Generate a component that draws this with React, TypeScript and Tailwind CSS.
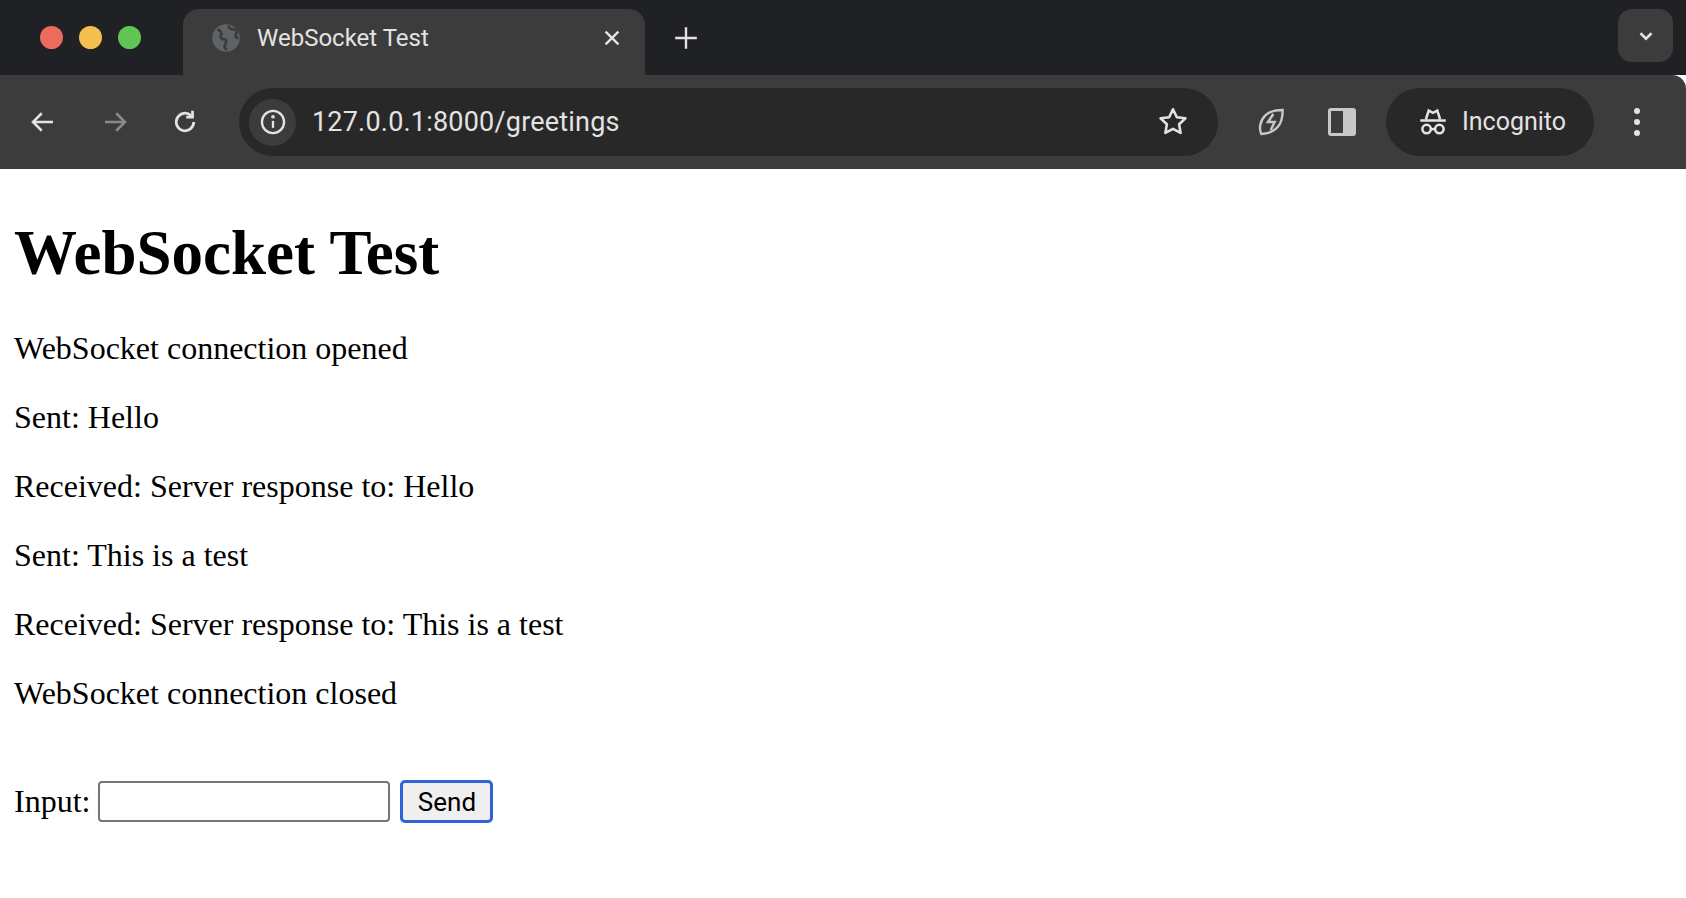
import React from "react";

const serif = { fontFamily: '"Liberation Serif", "Times New Roman", serif' };
const sans = { fontFamily: 'Roboto, "Noto Sans", Arial, sans-serif' };

export default function App() {
  const lines = [
    "WebSocket connection opened",
    "Sent: Hello",
    "Received: Server response to: Hello",
    "Sent: This is a test",
    "Received: Server response to: This is a test",
    "WebSocket connection closed",
  ];
  return (
    <div className="w-[1686px] h-[898px] bg-white overflow-hidden" style={sans}>
      {/* tab strip */}
      <div className="h-[75px] bg-[#202124] flex items-end relative">
        <div className="flex items-center gap-[16px] pl-[40px] h-[75px] w-[183px]">
          <div className="w-[23px] h-[23px] rounded-full bg-[#ec6a5e]" />
          <div className="w-[23px] h-[23px] rounded-full bg-[#f4bf4f]" />
          <div className="w-[23px] h-[23px] rounded-full bg-[#61c554]" />
        </div>
        <div className="w-[462px] h-[66px] bg-[#3c3c3c] rounded-t-[16px] flex items-center pl-[28px] pr-[22px] pb-[8px]">
          <svg width="30" height="30" viewBox="0 0 24 24">
            <circle cx="12" cy="12" r="11" fill="#5f6368" />
            <path d="M5 5c3 1 4 3 3 5s1 3 3 3 1 3 0 5c-1 2 1 3 2 3M14 2c0 2 2 3 4 3s3 2 2 4c-1 2 0 3 2 3" stroke="#3c3c3c" strokeWidth="2.2" fill="none" />
          </svg>
          <span className="ml-[16px] text-[24px] text-[#e3e3e3] flex-1">WebSocket Test</span>
          <svg width="22" height="22" viewBox="0 0 24 24" stroke="#e3e3e3" strokeWidth="2.6"><path d="M5 5l14 14M19 5L5 19" /></svg>
        </div>
        <div className="h-[66px] flex items-center pb-[8px] ml-[28px]">
          <svg width="26" height="26" viewBox="0 0 24 24" stroke="#e3e3e3" strokeWidth="2.2"><path d="M12 2v20M2 12h20" /></svg>
        </div>
        <div className="absolute right-[13px] top-[9px] w-[55px] h-[53px] rounded-[14px] bg-[#3c3c3c] flex items-center justify-center">
          <svg width="22" height="22" viewBox="0 0 24 24" fill="none" stroke="#e3e3e3" strokeWidth="2.8"><path d="M6 9l6 6 6-6" /></svg>
        </div>
      </div>
      {/* toolbar */}
      <div className="h-[94px] bg-[#3c3c3c] rounded-tr-[14px] flex items-center">
        <div className="w-[239px] flex items-center">
          <svg className="ml-[28px]" width="30" height="30" viewBox="0 0 24 24" fill="none" stroke="#e3e3e3" strokeWidth="2"><path d="M20 12H5M11 5l-7 7 7 7" /></svg>
          <svg className="ml-[42px]" width="30" height="30" viewBox="0 0 24 24" fill="none" stroke="#8a8a8a" strokeWidth="2"><path d="M4 12h15M13 5l7 7-7 7" /></svg>
          <svg className="ml-[40px]" width="30" height="30" viewBox="0 0 24 24" fill="none" stroke="#e3e3e3" strokeWidth="2.2"><path d="M19 12a7 7 0 1 1-2.2-5.1" /><path d="M18 3v5h-5" /></svg>
        </div>
        <div className="w-[979px] h-[68px] rounded-full bg-[#282828] flex items-center pl-[10px] pr-[28px]">
          <div className="w-[47px] h-[47px] rounded-full bg-[#3c3c3c] flex items-center justify-center">
            <svg width="28" height="28" viewBox="0 0 24 24" fill="none" stroke="#e3e3e3" strokeWidth="2"><circle cx="12" cy="12" r="9.5" /><path d="M12 11v6" /><circle cx="12" cy="7.5" r="0.6" fill="#e3e3e3" /></svg>
          </div>
          <span className="ml-[16px] text-[27px] text-[#e3e3e3] flex-1 tracking-[0.2px]">127.0.0.1:8000/greetings</span>
          <svg width="34" height="34" viewBox="0 0 24 24" fill="none" stroke="#e3e3e3" strokeWidth="1.8" strokeLinejoin="round"><path d="M12 3l2.7 5.6 6.1.8-4.5 4.2 1.1 6.1L12 16.8l-5.4 2.9 1.1-6.1-4.5-4.2 6.1-.8z" /></svg>
        </div>
        <svg className="ml-[38px]" width="32" height="32" viewBox="0 0 24 24" fill="none" stroke="#c8c8c8" strokeWidth="1.8"><path d="M4 21c-2-4-1-10 3-14s10-4 13-4c0 3 0 9-4 13s-9 5-12 5z" /><path d="M13 6l-4 6h5l-3 6" /></svg>
        <div className="ml-[40px] w-[28px] h-[28px] rounded-[3px] bg-[#c8c8c8] flex justify-start p-[3px]">
          <div className="w-[12px] h-full bg-[#3c3c3c]" />
        </div>
        <div className="ml-[30px] w-[208px] h-[68px] rounded-full bg-[#282828] flex items-center pl-[30px]">
          <svg width="34" height="34" viewBox="0 0 24 24" fill="none" stroke="#e3e3e3" strokeWidth="1.8"><path d="M7 10l2-6 3 1.5L15 4l2 6M3 11h18" /><circle cx="7.5" cy="17" r="3" /><circle cx="16.5" cy="17" r="3" /><path d="M10.5 17h3" /></svg>
          <span className="ml-[12px] text-[25px] text-[#e3e3e3]">Incognito</span>
        </div>
        <div className="ml-[40px] flex flex-col gap-[5px]">
          <div className="w-[6px] h-[6px] rounded-full bg-[#e3e3e3]" />
          <div className="w-[6px] h-[6px] rounded-full bg-[#e3e3e3]" />
          <div className="w-[6px] h-[6px] rounded-full bg-[#e3e3e3]" />
        </div>
      </div>
      {/* content */}
      <div className="pl-[14px] text-black" style={serif}>
        <h1 className="mt-[48px] text-[63px] leading-[72px] font-bold">WebSocket Test</h1>
        <div className="mt-[41px] flex flex-col gap-[32px]">
          {lines.map((l) => (
            <p key={l} className="text-[32px] leading-[37px]">{l}</p>
          ))}
        </div>
        <div className="mt-[69px] flex items-center h-[41px]">
          <span className="text-[32px] leading-[37px]">Input:</span>
          <div className="ml-[8px] w-[292px] h-[41px] border-[2px] border-[#767676] rounded-[4px] bg-white" />
          <button className="ml-[10px] w-[93px] h-[43px] border-[3px] border-[#2f63d6] rounded-[5px] bg-[#efefef] text-[26px] text-black" style={sans}>Send</button>
        </div>
      </div>
    </div>
  );
}
